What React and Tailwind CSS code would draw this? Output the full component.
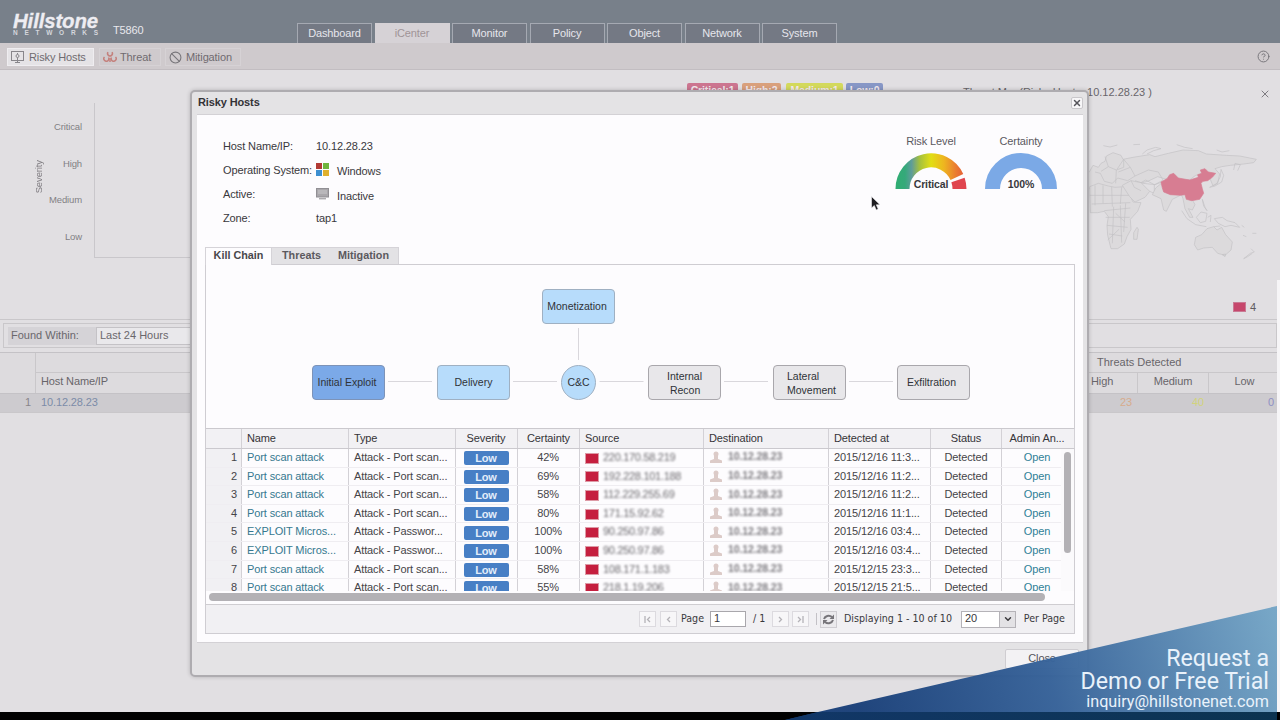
import React from 'react';
import { X, Ban, CircleHelp, ChevronDown } from 'lucide-react';

const NAV = ['Dashboard', 'iCenter', 'Monitor', 'Policy', 'Object', 'Network', 'System'];

const LEVELS = [
  { label: 'Critical:1', cls: 'ml-[1px] w-[51px] bg-[#cc7590]' },
  { label: 'High:2', cls: 'ml-[4px] w-[39px] bg-[#d9a07c]' },
  { label: 'Medium:1', cls: 'ml-[5px] w-[57px] bg-[#d3d95c]' },
  { label: 'Low:0', cls: 'ml-[3px] w-[37px] bg-[#8797c6]' },
];

const THREATS = [
  { name: 'Port scan attack', type: 'Attack - Port scan...', certainty: '42%', source: '220.170.58.219', at: '2015/12/16 11:3...' },
  { name: 'Port scan attack', type: 'Attack - Port scan...', certainty: '69%', source: '192.228.101.188', at: '2015/12/16 11:2...' },
  { name: 'Port scan attack', type: 'Attack - Port scan...', certainty: '58%', source: '112.229.255.69', at: '2015/12/16 11:2...' },
  { name: 'Port scan attack', type: 'Attack - Port scan...', certainty: '80%', source: '171.15.92.62', at: '2015/12/16 11:1...' },
  { name: 'EXPLOIT Micros...', type: 'Attack - Passwor...', certainty: '100%', source: '90.250.97.86', at: '2015/12/16 03:4...' },
  { name: 'EXPLOIT Micros...', type: 'Attack - Passwor...', certainty: '100%', source: '90.250.97.86', at: '2015/12/16 03:4...' },
  { name: 'Port scan attack', type: 'Attack - Port scan...', certainty: '58%', source: '108.171.1.183', at: '2015/12/15 23:3...' },
  { name: 'Port scan attack', type: 'Attack - Port scan...', certainty: '55%', source: '218.1.19.206', at: '2015/12/15 21:5...' },
];

const GRID = 'grid grid-cols-[36px_107px_107px_62px_62px_124px_125px_102px_71px_73px]';

const Header = () => (
  <header className="flex h-[43px] shrink-0 items-end bg-[#78808a]">
    <svg width="90" height="30" viewBox="0 0 90 30" className="mb-[5px] ml-[12px] shrink-0 overflow-visible">
      <text x="1" y="20" textLength="85" lengthAdjust="spacingAndGlyphs" fontFamily="Liberation Sans, sans-serif" fontSize="21" fontWeight="bold" fontStyle="italic" fill="#eeedf2" stroke="#eeedf2" strokeWidth="0.300">Hillstone</text>
      <text x="1" y="27" textLength="85" fontFamily="Liberation Sans, sans-serif" fontSize="6.500" fontWeight="bold" fill="#d5d7dd">NETWORKS</text>
    </svg>
    <span className="mb-[5px] ml-[11px] w-[184px] text-[11px] text-[#e8e8ed]">T5860</span>
    <nav className="flex gap-[2.500px]">
      {NAV.map((item) =>
        item === 'iCenter' ? (
          <span key={item} className="flex h-[20px] w-[75px] items-center justify-center bg-[#d6d2d6] text-[11px] text-[#a09496]">{item}</span>
        ) : (
          <span key={item} className="flex h-[20px] w-[75px] items-center justify-center border border-b-0 border-[#a5a9b2] bg-[#747984] text-[11px] text-[#e6e6ec]">{item}</span>
        )
      )}
    </nav>
  </header>
);

const SubNav = () => (
  <div className="flex h-[27px] shrink-0 items-center border-b border-[#c2bdc1] bg-[#cfcacd] pl-[7px] text-[11px] text-[#6f6b70]">
    <span className="mt-[2px] flex h-[18px] w-[87px] items-center border border-[#efedf0] bg-[#e5e3e6] pl-[3px]">
      <svg width="13" height="12" viewBox="0 0 13 12" fill="none" stroke="#88868b" className="mr-[5px] shrink-0">
        <rect x="0.500" y="0.500" width="12" height="9" />
        <circle cx="6.500" cy="5" r="1.500" />
        <path d="M6.500 2v1.500M6.500 6.500v5M4 11.500h5" />
      </svg>
      Risky Hosts
    </span>
    <span className="mt-[2px] ml-[5px] flex h-[18px] w-[62px] items-center border border-[#d6d2d5] pl-[3px]">
      <svg width="14" height="14" viewBox="0 0 14 14" fill="none" stroke="#c4807c" strokeWidth="1.500" className="mr-[3px] shrink-0">
        <path d="M5 2.200A2.400 2.400 0 1 0 9 2.200" />
        <path d="M1.500 7A2.500 2.500 0 1 0 5.500 7.500" />
        <path d="M12.500 7A2.500 2.500 0 1 1 8.500 7.500" />
        <path d="M7 8v4" />
      </svg>
      Threat
    </span>
    <span className="mt-[2px] ml-[4px] flex h-[18px] w-[76px] items-center border border-[#d6d2d5] pl-[3px]">
      <Ban size={13} strokeWidth={2} className="mr-[4px] shrink-0 text-[#77757a]" />
      Mitigation
    </span>
    <CircleHelp size={13} strokeWidth={1.8} className="mr-[10px] ml-auto text-[#77757a]" />
  </div>
);

const SeverityChart = () => (
  <div className="flex h-full w-[191px] pt-[33px]">
    <div className="flex w-[45px] shrink-0 items-center justify-end pb-[68px]">
      <span className="w-[12px] rotate-180 text-center text-[9.500px] leading-[12px] text-[#7f7c81] [writing-mode:vertical-rl]">Severity</span>
    </div>
    <div className="flex w-[49px] flex-col gap-[24.500px] pt-[18px] pr-[12px] text-right text-[9.500px] leading-[12px] text-[#827f84]">
      <span>Critical</span>
      <span>High</span>
      <span>Medium</span>
      <span>Low</span>
    </div>
    <div className="h-[155px] flex-1 border-b border-l border-[#c9c7cb]" />
  </div>
);

const WorldMap = () => (
  <svg width="195" height="140" viewBox="0 0 585 420" fill="#dcdadc" stroke="#c3c1c4" strokeWidth="2" strokeLinejoin="round">
    <path d="M55 47l20 4 22-6M145 44l20-1M172 72l14-12 26-8 16 4-22 6-20 10M275 44l24 8 24 4M395 60l16 6 22-4" fill="none" />
    {/* Europe and Russia */}
    <path d="M14 124l10-18 16 6 8-12 12-6 4-16 20-10 24 8 6 12 30-6 50-8 16 6 40-10 44-10 46 2 24 10 60 4 40 2 30 6 20 4-8 10-30 4-40 4-26 4-20 6 14 16-6 28-14 8-12-30-20-6-20 4-16 12-40 4-38-6-20-6-30 14-16 4-28 6-10 20-30 12-20-12-24 8-20-14-24-4-18 6-20-14z" />
    <path d="M60 80l10 30 24 10 22-8 0-24 20 24 14 26-22 14-30-8-16 16-24-6-12-24-16-4M94 120l-2 40M116 88l-20 30M70 110l-22 14M136 112l-36 14M150 138l40-18 30 6 14 24-24 14-36-4-24-8M446 120l4-20 16 4-8 18" fill="none" />
    {/* Africa */}
    <path d="M14 170l26-10 30 8 20 4 30-2 14 24 10 22 24 2-10 26-22 24 2 30-12 22-8 22-20 14-20 0-10-40-2-30 4-26-12-16-20 4-22 0z" />
    <path d="M30 166l0 60M54 166l0 54M80 170l2 60M110 172l-4 50M14 196l130 0M20 222l116-4M58 242l78-8M62 262l72 0M66 286l62 6M72 312l40 6M86 230l-4 110M106 226l4 112M122 220l-6 86M92 250l28 26M68 330l34-32" fill="none" />
    <path d="M146 328l0-20 10-16 4 6-4 30z" />
    {/* Arabia, India and Indochina */}
    <path d="M112 166l26-14 30 6 26 26-14 18-30 14-16-16z" />
    <path d="M138 152l10 20 20 10M168 158l14-8 26 14 0 26-14-6M208 164l24-8" fill="none" />
    <path d="M202 194l10-20 20-16 50 26 4 12-24 12-18 36-8-4-8-34z" />
    <path d="M286 186l8 20 6 30 14 26 10 0-14-26 12 4 8-16-10-18-6-8" />
    <path d="M290 242l16 24 26 18 32 6M334 262l14-16 18 4-4 24-16 4zM368 262l10-6-2 20M352 208l8 24 6 10-10-14zM386 290l20-2M388 266l24-4 14 10 24 6 14 14-26-6-18 4-20-10zM470 286l8 6M474 316l10 4M502 310l12 0" fill="none" />
    {/* Japan */}
    <path d="M408 118l8 18-6 20-20 12-16 4 22-12 10-20z" fill="none" />
    <path d="M332 322l18-8 16-18 20-6 10 10 14-8 12 22 20 22-4 24-18 16-22-6-16-18-26 2-18 6-10-16z" />
    <path d="M412 374l10-2-2 8zM498 356l10 10-12 4-20 16 12-6 14-10" fill="none" />
    {/* China */}
    <path d="M228 156l18-10 8-12 12-4 14 14 34 6 26-8-2-8 12-4-4-10 14-4 10 10 22 4-10 12-14 10-14 2-6 6 4 16 4 14-12 18-24 4-16-4-4-14-14 2-30-2-20-8-4-12z" fill="#d77d92" stroke="#d77d92" />
  </svg>
);

const Page = () => (
  <div className="flex h-[712px] flex-col bg-[#e1dfe2]">
    <Header />
    <SubNav />
    <div className="flex h-[249px] shrink-0 justify-between">
      <SeverityChart />
      <div className="flex flex-1 pt-[13px] pl-[495px]">
        {LEVELS.map((l) => (
          <span key={l.label} className={`${l.cls} h-[15px] overflow-hidden rounded-[2px] text-center text-[10.500px] font-bold leading-[15px] text-[#f3e9ee]`}>
            {l.label}
          </span>
        ))}
      </div>
      <div className="flex w-[317px] flex-col">
        <div className="flex h-[60px] items-start justify-between pt-[15px] pr-[9px]">
          <span className="text-[11px] leading-[15px] tracking-normal whitespace-pre text-[#68656a]">Threat Map(Risky Hosts: 10.12.28.23 )</span>
          <X size={12} strokeWidth={1.9} className="mt-[3px] text-[#77757a]" />
        </div>
        <div className="flex justify-end">
          <WorldMap />
        </div>
        <div className="mt-[29px] flex items-center justify-end gap-[4px] pr-[24px] text-[11px] leading-[16px] text-[#5e5b60]">
          <span className="h-[10px] w-[13px] border border-[#c97a94] bg-[#c6476c]" />4
        </div>
      </div>
    </div>
    <div className="h-[33px] shrink-0 border-t border-[#c9c7ca] p-[3px]">
      <div className="flex h-[25px] items-center border border-[#c9c7ca] px-[4px] text-[11px] tracking-normal text-[#6a676c]">
        <span className="flex h-[18px] w-[88px] items-center bg-[#d5d3d7] pl-[3px]">Found Within:</span>
        <span className="flex h-[18px] w-[160px] items-center border border-[#c4c2c6] bg-[#e9e8eb] pl-[3px]">Last 24 Hours</span>
      </div>
    </div>
    <div className="flex h-[42px] shrink-0 border-y border-[#c4c2c6] bg-[#dddbde] text-[11px] text-[#68656a]">
      <div className="w-[36px] border-r border-[#c9c7ca]" />
      <div className="flex flex-1 flex-col">
        <div className="h-[20px] border-b border-[#c9c7ca] pl-[1061px] leading-[18px] tracking-normal whitespace-nowrap">Threats Detected</div>
        <div className="flex flex-1 leading-[16px]">
          <span className="w-[1030px] pl-[5px]">Host Name/IP</span>
          <span className="h-full w-[72px] border-r border-[#c9c7ca] pl-[25px]">High</span>
          <span className="h-full w-[71px] border-r border-[#c9c7ca] text-center">Medium</span>
          <span className="flex-1 text-center">Low</span>
        </div>
      </div>
    </div>
    <div className="flex h-[19px] shrink-0 items-center border-b border-[#c9c7ca] bg-[#cdcbcf] pb-[1px] text-[11px]">
      <span className="w-[36px] pr-[5px] text-right text-[#88858a]">1</span>
      <span className="w-[1030px] pl-[5px] text-[#7c8ba8]">10.12.28.23</span>
      <span className="w-[66px] text-right text-[#d7ab8d]">23</span>
      <span className="w-[72px] text-right text-[#d2d37c]">40</span>
      <span className="w-[70px] text-right text-[#8f8fc4]">0</span>
    </div>
  </div>
);

const RiskGauge = () => (
  <div className="flex w-[72px] flex-col items-center">
    <span className="text-[11px] leading-[14px] text-[#5b595e]">Risk Level</span>
    <svg width="72" height="37" viewBox="-36 -36 72 37" className="mt-[5px]">
      <defs>
        <linearGradient id="risk" gradientUnits="userSpaceOnUse" x1="-36" y1="0" x2="36" y2="0">
          <stop offset="0" stopColor="#2fae72" />
          <stop offset="0.140" stopColor="#35a97a" />
          <stop offset="0.230" stopColor="#5f9c9a" />
          <stop offset="0.340" stopColor="#a4c03e" />
          <stop offset="0.500" stopColor="#e2de14" />
          <stop offset="0.680" stopColor="#eeb520" />
          <stop offset="0.850" stopColor="#ea7a30" />
          <stop offset="1" stopColor="#e2543c" />
        </linearGradient>
      </defs>
      <path d="M-28.500 0A28.500 28.500 0 0 1 25.900 -12" fill="none" stroke="url(#risk)" strokeWidth="14" />
      <path d="M27 -9A28.500 28.500 0 0 1 28.500 0" fill="none" stroke="#e0454f" strokeWidth="14" />
      <text x="0" y="-1" textAnchor="middle" fontFamily="Liberation Sans, sans-serif" fontSize="10.500" fontWeight="bold" fill="#38383c">Critical</text>
    </svg>
  </div>
);

const CertaintyGauge = () => (
  <div className="flex w-[72px] flex-col items-center">
    <span className="text-[11px] leading-[14px] text-[#5b595e]">Certainty</span>
    <svg width="72" height="37" viewBox="-36 -36 72 37" className="mt-[5px]">
      <path d="M-28.500 0A28.500 28.500 0 0 1 28.500 0" fill="none" stroke="#7ba9e6" strokeWidth="15" />
      <text x="0" y="-1" textAnchor="middle" fontFamily="Liberation Sans, sans-serif" fontSize="10.500" fontWeight="bold" fill="#38383c">100%</text>
    </svg>
  </div>
);

const HostInfo = () => (
  <div className="flex h-[132px] shrink-0 justify-between pt-[19px] pr-[26px] pl-[26px]">
    <div className="grid grid-cols-[93px_100px] content-start text-[11px] leading-[24px] text-[#39383c]">
      <span>Host Name/IP:</span>
      <span>10.12.28.23</span>
      <span className="whitespace-nowrap">Operating System:</span>
      <span className="flex items-center pt-[1px]">
        <span className="mr-[8px] mb-[4px] grid grid-cols-2 gap-[1px]">
          <i className="size-[6px] bg-[#b23a35]" />
          <i className="size-[6px] bg-[#6fb53e]" />
          <i className="size-[6px] bg-[#3d8fd0]" />
          <i className="size-[6px] bg-[#dfb02e]" />
        </span>
        Windows
      </span>
      <span className="-mt-[1px]">Active:</span>
      <span className="mt-[1px] flex items-center">
        <svg width="13" height="12" viewBox="0 0 13 12" className="mr-[8px] mb-[4px]">
          <rect x="0.500" y="0.500" width="12" height="8.500" fill="#a9a7ab" stroke="#918f94" />
          <path d="M2 3h9M2 5h9" stroke="#c9c8cb" />
          <path d="M3 10.800h7" stroke="#8b898e" />
        </svg>
        Inactive
      </span>
      <span className="-mt-[2px]">Zone:</span>
      <span className="-mt-[2px]">tap1</span>
    </div>
    <div className="flex gap-[18px]">
      <RiskGauge />
      <CertaintyGauge />
    </div>
  </div>
);

const NODE = 'absolute flex items-center justify-center border text-[10.500px] leading-[14px] tracking-normal text-[#2f3338]';

const KillChain = () => (
  <div className="relative h-[163px] shrink-0">
    <svg width="868" height="163" className="absolute inset-0" stroke="#d9d7dc" strokeWidth="1">
      <path d="M182 116.500h44M307 116.500h44M393.500 116.500h44M518 116.500h44M643 116.500h44M372.500 63v32" fill="none" />
    </svg>
    <div className={`${NODE} top-[24px] left-[336px] h-[35px] w-[73px] rounded-[4px] border-[#9fb0c2] bg-[#b7dcfb] pr-[3px] pb-[1px]`}>Monetization</div>
    <div className={`${NODE} top-[100px] left-[106px] h-[35px] w-[73px] rounded-[4px] border-[#7d93b8] bg-[#7ba9e8] pr-[3px] pb-[2px]`}>Initial Exploit</div>
    <div className={`${NODE} top-[100px] left-[231px] h-[35px] w-[73px] rounded-[4px] border-[#9fb0c2] bg-[#b7dcfb] pb-[2px]`}>Delivery</div>
    <div className={`${NODE} top-[100px] left-[355px] size-[35px] rounded-full border-[#9fb0c2] bg-[#b7dcfb] pb-[2px]`}>C&amp;C</div>
    <div className={`${NODE} top-[100px] left-[442px] h-[35px] w-[73px] rounded-[4px] border-[#a9a7ac] bg-[#e8e7ea]`}>
      <span>
        Internal
        <br />
        &nbsp;Recon
      </span>
    </div>
    <div className={`${NODE} top-[100px] left-[567px] h-[35px] w-[73px] rounded-[4px] border-[#a9a7ac] bg-[#e8e7ea] pl-[4px]`}>
      Lateral
      <br />
      Movement
    </div>
    <div className={`${NODE} top-[100px] left-[691px] h-[35px] w-[73px] rounded-[4px] border-[#a9a7ac] bg-[#e8e7ea] pr-[4px] pb-[2px]`}>Exfiltration</div>
  </div>
);

const Cell = ({ className = '', children }) => (
  <div className={`flex items-center overflow-hidden border-r border-[#d3d1d6] pb-[1px] whitespace-nowrap ${className}`}>{children}</div>
);

const ThreatTable = () => (
  <div className="flex flex-col text-[11px] text-[#454448]">
    <div className={`${GRID} h-[21px] border-y border-[#cbc9ce] bg-[#f2f1f4] text-[#353438]`}>
      <Cell />
      <Cell className="pl-[5px]">Name</Cell>
      <Cell className="pl-[5px]">Type</Cell>
      <Cell className="justify-center pr-[1px]">Severity</Cell>
      <Cell className="justify-center">Certainty</Cell>
      <Cell className="pl-[5px]">Source</Cell>
      <Cell className="pl-[5px]">Destination</Cell>
      <Cell className="pl-[5px]">Detected at</Cell>
      <Cell className="justify-center">Status</Cell>
      <Cell className="justify-center pr-[2px]">Admin An...</Cell>
    </div>
    <div className="relative h-[142px] overflow-hidden">
      {THREATS.map((t, i) => (
        <div key={i} className={`${GRID} h-[18.600px] border-b border-[#efedf1]`}>
          <Cell className="justify-end bg-[#f1f0f3] pr-[4px]">{i + 1}</Cell>
          <Cell className="pl-[5px] text-[#35788f]">{t.name}</Cell>
          <Cell className="pl-[5px]">{t.type}</Cell>
          <Cell className="justify-center pr-[1px]">
            <span className="mt-[2px] h-[14px] w-[45px] rounded-[2px] bg-[#477fc5] text-center leading-[14px] font-bold text-[#e3edfa]">Low</span>
          </Cell>
          <Cell className="justify-center pr-[1px]">{t.certainty}</Cell>
          <Cell className="pl-[5px]">
            <span className="mt-[2px] mr-[4px] h-[11px] w-[14px] shrink-0 border border-[#dd9aa6] bg-[#c51f3f]" />
            <span className="tracking-[-0.300px] text-[#6b696e] blur-[1px]">{t.source}</span>
          </Cell>
          <Cell className="pl-[5px]">
            <svg width="14" height="12" viewBox="0 0 14 12" className="mr-[5px] shrink-0 blur-[0.500px]" fill="#dccbc8">
              <circle cx="7" cy="3" r="2.500" />
              <path d="M5 5h4v3l4 1.500v2.500h-12v-2.500l4-1.500z" />
            </svg>
            <span className="text-[10.500px] font-bold text-[#7f7d82] blur-[1px]">10.12.28.23</span>
          </Cell>
          <Cell className="pl-[5px]">{t.at}</Cell>
          <Cell className="justify-center">Detected</Cell>
          <Cell className="justify-center pr-[2px] text-[#2f7f96]">Open</Cell>
        </div>
      ))}
      <div className="absolute top-0 right-0 h-full w-[13px] bg-[#fbfafc] pt-[3px] pl-[3px]">
        <div className="h-[101px] w-[7px] rounded-full bg-[#b3b1b5]" />
      </div>
    </div>
    <div className="h-[13px] pt-[2px] pl-[3px]">
      <div className="h-[8px] w-[836px] rounded-full bg-[#b3b1b5]" />
    </div>
  </div>
);

const PageButton = ({ children, className = '' }) => (
  <span className={`flex h-[16px] w-[17px] items-center justify-center border border-[#dcdadf] bg-[#f7f6f8] text-[#b4b2b7] ${className}`}>
    <svg width="9" height="9" viewBox="0 0 9 9" fill="none" stroke="currentColor" strokeWidth="1.300">{children}</svg>
  </span>
);

const Pager = () => (
  <div className="flex flex-1 items-center border-t border-[#cfcdd1] bg-[#f1f0f3] pr-[9px] pl-[433px] font-['DejaVu_Sans_Condensed','DejaVu_Sans',sans-serif] text-[10.600px] tracking-normal whitespace-nowrap text-[#39383c]">
    <PageButton><path d="M2 1v7M7 2L4.500 4.500L7 7" /></PageButton>
    <PageButton className="ml-[4px]"><path d="M6 2L3.500 4.500L6 7" /></PageButton>
    <span className="ml-[4px] w-[29px]">Page</span>
    <span className="h-[16px] w-[36px] border border-[#a9a7ac] bg-white pl-[3px] font-['Liberation_Sans',sans-serif] text-[11px] leading-[13px]">1</span>
    <span className="ml-[7px] w-[19px]">/ 1</span>
    <PageButton><path d="M3 2L5.500 4.500L3 7" /></PageButton>
    <PageButton className="ml-[3px]"><path d="M2 2L4.500 4.500L2 7M7 1v7" /></PageButton>
    <span className="ml-[7px] h-[12px] w-[1px] bg-[#c3c1c6]" />
    <span className="ml-[3px] flex size-[17px] items-center justify-center border border-[#cfcdd2] bg-[#ebeaed]">
      <svg width="13" height="13" viewBox="0 0 13 13" fill="none" stroke="#77757a" strokeWidth="2">
        <path d="M2 6C3 3 7 1.500 10 4M11 7C10 10 6 11.500 3 9" />
        <path d="M12 1.500v4.500h-4.500zM1 11.500V7h4.500z" fill="#77757a" stroke="none" />
      </svg>
    </span>
    <span className="ml-[7px] w-[117px]">Displaying 1 - 10 of 10</span>
    <span className="flex h-[17px] w-[55px] border border-[#b5b3b8] bg-white font-['Liberation_Sans',sans-serif] text-[11px]">
      <span className="flex-1 pl-[3px] leading-[13px]">20</span>
      <span className="flex w-[16px] items-center justify-center border-l border-[#b5b3b8] bg-[#e3e2e5]">
        <ChevronDown size={10} strokeWidth={3.5} />
      </span>
    </span>
    <span className="ml-auto">Per Page</span>
  </div>
);

const HostDialog = () => (
  <div className="absolute top-[90px] left-[190px] flex h-[587px] w-[899px] flex-col rounded-[5px] border-2 border-[#aeacb0] bg-[#e4e3e5] pr-[4px] pl-[5px] shadow-[0_0_4px_rgba(0,0,0,0.200)]">
    <div className="flex h-[22px] shrink-0 items-center justify-between pb-[2px] pl-[1px]">
      <span className="text-[11px] font-bold text-[#333236]">Risky Hosts</span>
      <span className="mt-[2px] flex size-[12px] items-center justify-center rounded-[2px] border border-[#c9c7cb] bg-[#f7f6f8]">
        <X size={10} strokeWidth={3.5} className="shrink-0 text-[#55545a]" />
      </span>
    </div>
    <div className="flex h-[529px] shrink-0 flex-col border-y border-[#d3d1d5] bg-[#fdfcfe]">
      <HostInfo />
      <div className="flex flex-1 flex-col px-[8px] pb-[8px]">
        <div className="flex h-[17px] shrink-0 text-[11px] leading-[15px] font-bold tracking-normal text-[#5b595e]">
          <span className="z-10 mb-[-1px] w-[67px] border border-b-0 border-[#d5d3d8] bg-[#fdfcfe] text-center text-[10.800px] text-[#48474b]">Kill Chain</span>
          <span className="w-[54px] border-t border-[#d5d3d8] bg-[#e3e2e5] pl-[5px] text-center text-[10.800px]">Threats</span>
          <span className="w-[73px] border-t border-r border-[#d5d3d8] bg-[#e3e2e5] pl-[3px] text-center text-[10.800px]">Mitigation</span>
        </div>
        <div className="flex flex-1 flex-col border border-[#cfcdd2]">
          <KillChain />
          <ThreatTable />
          <Pager />
        </div>
      </div>
    </div>
    <div className="flex flex-1 items-center justify-end pr-[4px]">
      <span className="flex h-[20px] w-[74px] items-center justify-center rounded-[2px] border border-[#cfcdd1] bg-[#f3f2f4] pb-[2px] text-[11px] text-[#55545a]">Close</span>
    </div>
  </div>
);

const Banner = () => (
  <div className="absolute right-0 bottom-0 h-[115px] w-[498px]">
    <svg width="498" height="115" viewBox="0 0 498 115" className="absolute inset-0">
      <defs>
        <linearGradient id="banner" gradientUnits="userSpaceOnUse" x1="80" y1="115" x2="490" y2="0">
          <stop offset="0" stopColor="#1a4079" />
          <stop offset="0.450" stopColor="#366299" />
          <stop offset="1" stopColor="#74a5c6" />
        </linearGradient>
        <linearGradient id="strip" x1="0" y1="0" x2="1" y2="0">
          <stop offset="0" stopColor="#123768" />
          <stop offset="1" stopColor="#0b3350" />
        </linearGradient>
      </defs>
      <path d="M3 115L36 107L495 1V115z" fill="url(#banner)" fillOpacity="0.970" />
      <path d="M3 115L36 107H495V115z" fill="url(#strip)" />
    </svg>
    <div className="relative flex flex-col items-end pt-[41px] pr-[11px] font-['Roboto',sans-serif] tracking-normal text-[#e9f2fb]">
      <span className="text-[23.200px] leading-[24px]">Request a</span>
      <span className="text-[23.200px] leading-[23px]">Demo or Free Trial</span>
      <span className="text-[16.200px] leading-[18px]">inquiry@hillstonenet.com</span>
    </div>
  </div>
);

const App = () => (
  <div className="relative h-[720px] w-[1280px] overflow-hidden bg-black font-['Liberation_Sans',Arial,sans-serif] tracking-[-0.120px]">
    <Page />
    <div className="absolute top-[280px] right-0 h-[432px] w-[3px] bg-[#f6f5f7]" />
    <HostDialog />
    <Banner />
    <svg width="10" height="15" viewBox="0 0 10 15" className="absolute top-[196px] left-[871px]">
      <path d="M0.500 0.500V12L3.300 9.500L5.200 14L7.200 13.100L5.300 8.800H9z" fill="#1d1c20" stroke="#f3f2f5" strokeWidth="0.600" />
    </svg>
  </div>
);

export default App;
